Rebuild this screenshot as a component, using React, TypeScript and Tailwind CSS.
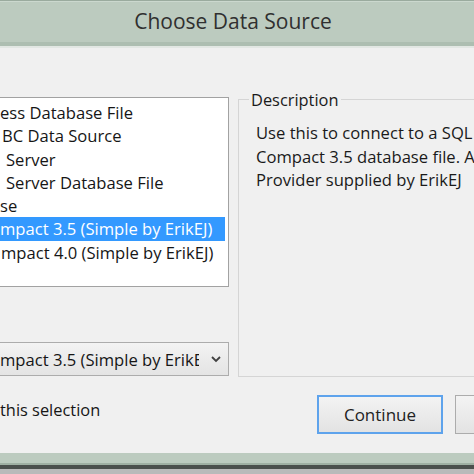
import React from "react";

const rows: { text: string; pad: string; selected?: boolean }[] = [
  { text: "ess Database File", pad: "pl-[0px]" },
  { text: "BC Data Source", pad: "pl-[2px]" },
  { text: "Server", pad: "pl-[6px]" },
  { text: "Server Database File", pad: "pl-[6px]" },
  { text: "se", pad: "pl-[0px]" },
  { text: "mpact 3.5 (Simple by ErikEJ)", pad: "pl-[0px]", selected: true },
  { text: "mpact 4.0 (Simple by ErikEJ)", pad: "pl-[1px]" },
];

export default function App() {
  return (
    <div className="w-[474px] h-[474px] overflow-hidden flex flex-col bg-[#bababa] font-['Open_Sans','Noto_Sans',sans-serif] text-[#161616]">
      {/* title bar */}
      <div className="h-px shrink-0 bg-[#9aab9e]" />
      <div className="h-px shrink-0 bg-[#cbd8ce]" />
      <div className="h-[40px] shrink-0 bg-[#bccbbf] flex items-center justify-center pr-[8px] text-[21px] text-[#303030]">
        Choose Data Source
      </div>
      <div className="h-[4px] shrink-0 bg-[#adbeb1]" />
      <div className="h-[2px] shrink-0 bg-[#e2e7e3]" />

      {/* content */}
      <div className="h-[405px] shrink-0 bg-[#f0f0f0] flex flex-col pt-[49px]">
        <div className="flex items-start gap-[9px]">
          <div className="w-[229px] shrink-0 flex flex-col">
            <div className="h-[190px] bg-white border-y border-r border-[#a2a2a2] pt-[3px] pr-[3px] overflow-hidden">
              {rows.map((r) => (
                <div
                  key={r.text}
                  className={`h-[23.3px] leading-[23.3px] text-[16.6px] whitespace-nowrap overflow-hidden ${r.pad} ${
                    r.selected ? "bg-[#3399ff] text-white" : "text-[#161616]"
                  }`}
                >
                  {r.text}
                </div>
              ))}
            </div>
            <div className="mt-[55px] h-[34px] border-y border-r border-[#acacac] bg-gradient-to-b from-[#f3f3f3] to-[#e4e4e4] flex items-center">
              <div className="w-[199px] shrink-0 overflow-hidden whitespace-nowrap text-[16.6px] leading-[22px] pt-[2px]">
                mpact 3.5 (Simple by ErikEJ)
              </div>
              <svg className="ml-[12px]" width="10" height="7" viewBox="0 0 10 7">
                <polyline points="1,1 5,5 9,1" fill="none" stroke="#404040" strokeWidth="1.8" />
              </svg>
            </div>
          </div>

          <div className="mt-[2px] w-[260px] shrink-0 h-[278px] border border-[#d5d5d5]">
            <div className="-mt-[11px] ml-[10px] w-fit px-[2px] bg-[#f0f0f0] text-[16.4px] leading-[22px] text-[#1a1a1a]">
              Description
            </div>
            <div className="mt-[10px] pl-[17px] text-[16.6px] leading-[23.5px] whitespace-nowrap text-[#1a1a1a]">
              <div>Use this to connect to a SQL Server</div>
              <div>Compact 3.5 database file. ADO.NET</div>
              <div>Provider supplied by ErikEJ</div>
            </div>
          </div>
        </div>

        <div className="mt-[18px] flex items-start">
          <div className="w-[317px] shrink-0 pt-[4px] text-[16.4px] leading-[22px] whitespace-nowrap">
            this selection
          </div>
          <button className="w-[126px] h-[39px] shrink-0 border-2 border-[#5ea3ec] bg-gradient-to-b from-[#f3f3f3] to-[#e3e3e3] text-[17px] text-[#222222] flex items-center justify-center">
            Continue
          </button>
          <button className="ml-[12px] w-[126px] h-[39px] shrink-0 border border-[#acacac] bg-gradient-to-b from-[#f3f3f3] to-[#e3e3e3] text-[17px] text-[#222222] flex items-center justify-center">
            Cancel
          </button>
        </div>
      </div>

      {/* bottom frame */}
      <div className="h-[10px] shrink-0 bg-[#bccbbf]" />
      <div className="h-[2px] shrink-0 bg-[#9fb0a3]" />
      <div className="h-[4px] shrink-0 bg-[#4b504d]" />
    </div>
  );
}
